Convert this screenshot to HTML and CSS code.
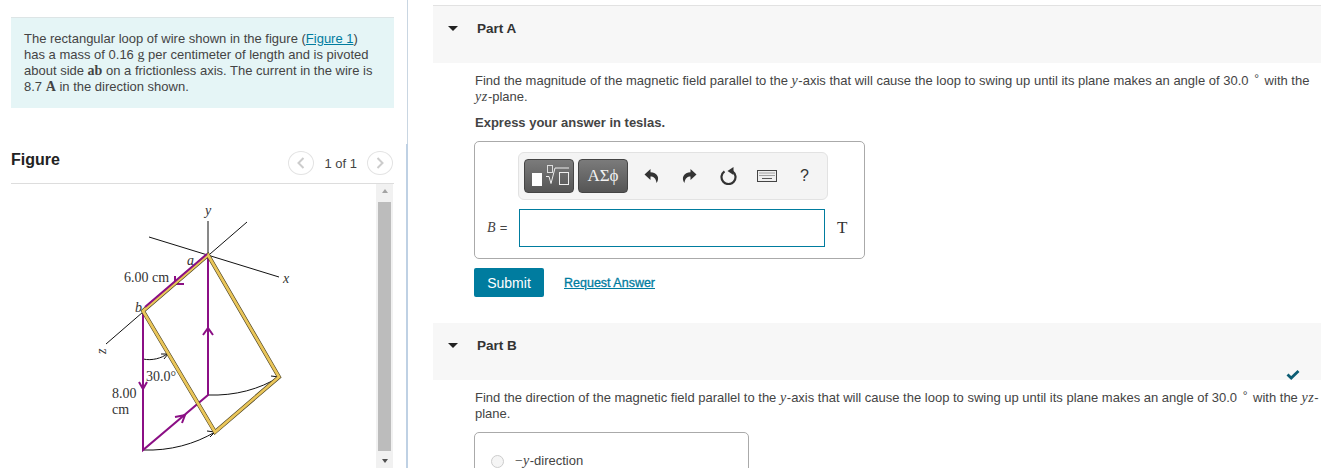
FILE: index.html
```html
<!DOCTYPE html>
<html lang="en">
<head>
<meta charset="utf-8">
<title>Part A</title>
<link rel="stylesheet" href="styles.css">
</head>
<body>
<div class="page">
  <aside class="left">
    <div class="note">The rectangular loop of wire shown in the figure (<a href="#">Figure 1</a>) has a mass of 0.16 <span class="mr">g</span> per centimeter of length and is pivoted about side <b class="mb">ab</b> on a frictionless axis. The current in the wire is 8.7 <b class="mb">A</b> in the direction shown.</div>
    <div class="fig-head">
      <h2>Figure</h2>
      <div class="pager">
        <span class="circ"><svg width="10" height="12" viewBox="0 0 10 12"><path d="M7.500 1 2.500 6l5 5" fill="none" stroke="#ccc" stroke-width="2"/></svg></span>
        <span class="count">1 of 1</span>
        <span class="circ"><svg width="10" height="12" viewBox="0 0 10 12"><path d="M2.500 1l5 5-5 5" fill="none" stroke="#ccc" stroke-width="2"/></svg></span>
      </div>
    </div>
    <div class="viewer">
      <svg class="diagram" width="365" height="284" viewBox="11 184 365 284">
        <g fill="none" stroke="#111" stroke-width="1">
          <path d="M149 237 279 277"/>
          <path d="M247 222 106 344"/>
          <path d="M208 221V255"/>
          <path d="M143 359C152 361 162 358 167 354M161 354l7 0-4 5"/>
          <path d="M208 395C235 396 260 389 279 377M271 376l8 1-5 5"/>
          <path d="M143 450C170 451 195 444 215 432M207 431l8 1-5 5"/>
        </g>
        <g fill="none" stroke="#8b0f85" stroke-width="2">
          <path d="M208 255 143 311V450L208 395V255"/>
          <path d="M175 276v8h9M139 382l4 7 4-7M203 335l5-7 5 7M175 417l10-2-3 8" stroke-width="2"/>
        </g>
        <path d="M208 255 143 311 215 432 279 377Z" fill="none" stroke="#4a4020" stroke-width="4"/>
        <path d="M208 255 143 311 215 432 279 377Z" fill="none" stroke="#eac65a" stroke-width="2.800"/>
        <path d="M208 255 146 308" fill="none" stroke="#8b0f85" stroke-width="2" transform="translate(-1 -1)"/>
        <g class="lbl">
          <text x="205" y="215" class="it">y</text>
          <text x="187" y="265" class="it">a</text>
          <text x="135" y="312" class="it">b</text>
          <text x="283" y="283" class="it">x</text>
          <text x="98" y="354" class="it" transform="rotate(-90 102 350)">z</text>
          <text x="124" y="282">6.00 cm</text>
          <text x="146" y="381">30.0°</text>
          <text x="112" y="398">8.00</text>
          <text x="112" y="414">cm</text>
        </g>
      </svg>
      <div class="scrollbar">
        <span class="tri up"></span>
        <span class="thumb"></span>
        <span class="tri down"></span>
      </div>
    </div>
  </aside>
  <div class="divider"><span class="div-top"></span><span class="div-bottom"></span></div>
  <main class="main">
    <section class="part">
      <header class="part-head"><span class="caret"></span><h3>Part A</h3></header>
      <div class="part-body">
        <p class="q">Find the magnitude of the magnetic field parallel to the <i class="m">y</i>-axis that will cause the loop to swing up until its plane makes an angle of 30.0 <span class="deg">°</span> with the <i class="m">yz</i>-plane.</p>
        <p class="express">Express your answer in teslas.</p>
        <div class="answer">
          <div class="toolbar">
            <span class="tbtn t1"><svg width="48" height="32" viewBox="1 1 48 32"><rect x="8" y="14" width="10" height="13" fill="#fff"/><rect x="23.500" y="6.500" width="5" height="7" fill="none" stroke="#ddd"/><path d="M22 17.500h3l2 7 4-15.500h14" fill="none" stroke="#eee"/><rect x="35.500" y="13.500" width="9" height="12" fill="none" stroke="#eee"/></svg></span>
            <span class="tbtn t2">ΑΣϕ</span>
            <span class="ticon i1"><svg width="15" height="16" viewBox="0 0 15 16"><path d="M6.500 1 .5 6.500l6 5.500V8.500c3 0 5.500 1.500 6 6.500 1.800-2.500 2-5 1-7-1-2.500-4-3.800-7-3.800z" fill="#333"/></svg></span>
            <span class="ticon i2"><svg width="15" height="16" viewBox="0 0 15 16"><path d="M8.500 1l6 5.500-6 5.500V8.500c-3 0-5.500 1.500-6 6.500C.7 12.500.5 10 1.500 8c1-2.500 4-3.800 7-3.800z" fill="#333"/></svg></span>
            <span class="ticon i3"><svg width="18" height="18" viewBox="0 0 18 18"><path d="M12.500 4.300A7 7 0 1 1 4.500 4.300" fill="none" stroke="#333" stroke-width="2.200"/><path d="M7.500 4 13.500 0v8z" fill="#333"/></svg></span>
            <span class="ticon i4"><svg width="20" height="12" viewBox="0 0 20 12"><rect x=".5" y=".5" width="19" height="11" fill="#eee" stroke="#444"/><path d="M2.500 3h15M2.500 5.500h15" stroke="#555" stroke-dasharray="1 1"/><path d="M5 8.500h10" stroke="#555"/></svg></span>
            <span class="ticon i5">?</span>
          </div>
          <div class="input-row">
            <span class="b-label"><i class="m">B</i> =</span>
            <span class="field"></span>
            <span class="unit">T</span>
          </div>
        </div>
        <div class="actions">
          <button class="submit" type="button">Submit</button>
          <a class="request" href="#">Request Answer</a>
        </div>
      </div>
    </section>
    <section class="part part-b">
      <header class="part-head"><span class="caret"></span><h3>Part B</h3>
        <svg class="check" width="14" height="11" viewBox="0 0 14 11"><path d="M1.500 5.500 5.200 9 12.500 2" fill="none" stroke="#0b5c73" stroke-width="2.800"/></svg>
      </header>
      <div class="part-body">
        <p class="q">Find the direction of the magnetic field parallel to the <i class="m">y</i>-axis that will cause the loop to swing up until its plane makes an angle of 30.0 <span class="deg">°</span> with the <i class="m">yz</i>-plane.</p>
        <div class="options">
          <label class="option"><span class="radio"></span><span><span class="minus">−</span><i class="m">y</i>-direction</span></label>
        </div>
      </div>
    </section>
  </main>
</div>
</body>
</html>
```
FILE: styles.css
```css
* { box-sizing: border-box; }
html, body { margin: 0; padding: 0; height: 468px; overflow: hidden; background: #fff; }
body { font-family: "Liberation Sans", Arial, sans-serif; font-size: 13px; line-height: 16px; color: #444; }
a { color: #007c9f; }
.page { display: flex; width: 1340px; height: 468px; overflow: hidden; }

.left { width: 406px; flex: none; padding: 17px 12px 0 11px; }
.note { width: 383px; height: 91px; background: #e5f5f6; border-top: 1px solid #dde5e6; padding: 13px 13px 0; color: #444; }
.mr, .mb { font-family: "Liberation Serif", serif; font-size: 14px; line-height: 10px; }
.fig-head { width: 383px; height: 76px; display: flex; align-items: flex-end; justify-content: space-between; border-bottom: 1px solid #ddd; padding-bottom: 8px; }
.fig-head h2 { margin: 0 0 6px; font-size: 16px; font-weight: bold; color: #222; line-height: 18px; }
.pager { display: flex; align-items: center; gap: 10px; margin-right: 1px; }
.circ { width: 26px; height: 24px; border: 1px solid #e3e3e3; border-radius: 50%; display: flex; align-items: center; justify-content: center; }
.count { padding-top: 2px; }
.viewer { width: 382px; height: 284px; display: flex; justify-content: space-between; }
.diagram { display: block; flex: none; }
.lbl text { font-family: "Liberation Serif", serif; font-size: 14px; fill: #333; }
.lbl .it { font-style: italic; }
.scrollbar { width: 17px; height: 284px; background: #f1f1f1; display: flex; flex-direction: column; align-items: center; justify-content: space-between; padding: 5px 0; margin-left: -1px; }
.thumb { width: 13px; height: 249px; background: #bcbcbc; }
.tri { width: 0; height: 0; border-left: 3.5px solid transparent; border-right: 3.5px solid transparent; }
.tri.up { border-bottom: 4px solid #a3a3a3; }
.tri.down { border-top: 4px solid #505050; }

.divider { width: 2px; flex: none; display: flex; flex-direction: column; }
.div-top { height: 144px; width: 1px; margin-left: 1px; background: #c9d6e2; }
.div-bottom { flex: 1; background: #bfd1e4; }

.main { width: 913px; flex: none; padding: 5px 0 0 25px; }
.part-head { height: 58px; width: 888px; background: #f7f7f7; border-top: 1px solid #e2e2e2; display: flex; align-items: flex-start; padding-top: 15px; position: relative; }
.part-b .part-head { height: 57px; border-top: 0; }
.part-head h3 { margin: 0; font-size: 13.5px; line-height: 16px; font-weight: bold; color: #333; }
.caret { width: 0; height: 0; border-left: 5px solid transparent; border-right: 5px solid transparent; border-top: 5px solid #222; margin: 5px 19px 0 15px; }
.check { position: absolute; right: 21px; bottom: 0; }
.part-body { padding: 10px 0 0 42px; width: 888px; }
.q { margin: 0; }
.deg { font-family: "Liberation Sans", sans-serif; font-size: 12px; line-height: 10px; padding: 0 2px; position: relative; top: -2px; }
.m { font-family: "Liberation Serif", serif; font-style: italic; font-size: 14px; line-height: 10px; letter-spacing: .6px; }
.express { margin: 10px 0 0; font-weight: bold; }
.answer { width: 391px; height: 118px; margin: 10px 0 0 -1px; border: 1px solid #aaa; border-radius: 5px; padding: 10px 0 0 43px; }
.toolbar { width: 310px; height: 48px; background: #f4f4f4; border: 1px solid #e2e2e2; border-radius: 6px; display: flex; align-items: center; padding-left: 5px; }
.tbtn { width: 50px; height: 34px; border: 1px solid #444; border-radius: 4px; background: linear-gradient(#7b7b7b, #555); display: flex; align-items: center; justify-content: center; color: #f2f2f2; }
.t1 { margin-right: 4px; }
.t2 { font-family: "Liberation Serif", serif; font-size: 17px; }
.ticon { display: flex; align-items: center; justify-content: center; color: #333; }
.i1 { margin-left: 16px; }
.i2 { margin-left: 23px; }
.i3 { margin-left: 23px; }
.i4 { margin-left: 19px; }
.i5 { margin-left: 23px; font-size: 16px; }
.input-row { display: flex; align-items: center; height: 38px; margin-top: 9px; margin-left: -31px; }
.b-label { width: 32px; color: #444; }
.field { width: 306px; height: 38px; border: 1px solid #007c9f; background: #fff; }
.unit { margin-left: 12px; font-family: "Liberation Serif", serif; font-size: 17px; color: #333; }
.actions { display: flex; align-items: center; margin: 9px 0 0 -1px; }
.submit { width: 70px; height: 29px; border: 0; border-radius: 2px; background: #007c9f; color: #fff; font-family: inherit; font-size: 14px; padding: 0; }
.request { margin-left: 20px; font-size: 12.5px; -webkit-text-stroke: .3px #007c9f; }
.part-b { margin-top: 26px; }
.options { width: 275px; height: 80px; margin: 10px 0 0 -1px; border: 1px solid #aaa; border-radius: 5px; padding: 20px 0 0 16px; }
.option { display: flex; align-items: center; gap: 11px; color: #444; }
.radio { width: 13px; height: 13px; border-radius: 50%; border: 1px solid #ccc; background: #f5f5f5; }
.minus { font-family: "Liberation Serif", serif; font-size: 14px; }
```
